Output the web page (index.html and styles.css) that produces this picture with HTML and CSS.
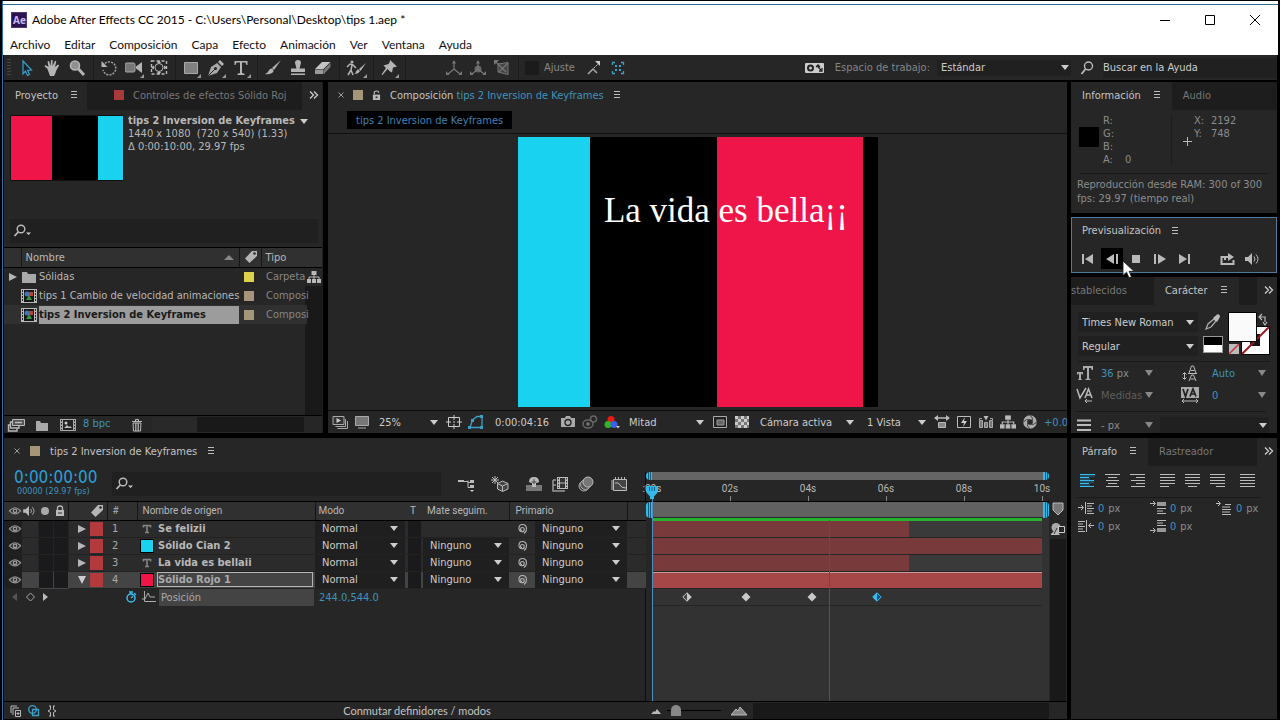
FILE: index.html
```html
<!DOCTYPE html>
<html lang="es">
<head>
    <meta charset="utf-8">
    <meta name="viewport" content="width=device-width">
    <title>Adobe After Effects CC 2015</title>
    <link rel="stylesheet" href="styles.css">
</head>
<body>
    <!-- iconos repetidos -->
    <svg class="defs" aria-hidden="true">
        <symbol id="menu" viewBox="0 0 8 8"><path d="M1 .5h6M1 3.500h6M1 6.500h6" stroke="#bbb" fill="none"/></symbol>
        <symbol id="more" viewBox="0 0 10 8"><path d="M1 .5 4.500 4 1 7.500M5 .5 8.500 4 5 7.500" stroke="#ccc" stroke-width="1.300" fill="none"/></symbol>
        <symbol id="close" viewBox="0 0 6 6"><path d="m.5.5 5 5m0-5-5 5" stroke="#999" fill="none"/></symbol>
        <symbol id="search" viewBox="0 0 20 14"><circle cx="8" cy="5" r="3.800" fill="none" stroke="#bbb" stroke-width="1.400"/><path d="M5.300 8 1.500 12" stroke="#bbb" stroke-width="1.800"/><path d="M13 8.500h5L15.500 11z" fill="#ccc"/></symbol>
        <symbol id="eye" viewBox="0 0 14 10"><path d="M.5 5Q7-2.500 13.500 5 7 12 .5 5z" fill="#8c8c8c"/><path d="M2.500 5Q7-.5 11.500 5 7 9.500 2.500 5z" fill="#222"/><circle cx="7" cy="5" r="2.400" fill="#999"/><circle cx="7" cy="4.800" r="1" fill="#222"/></symbol>
        <symbol id="tag" viewBox="0 0 14 14"><path d="M8 1h5v5L5.500 13 1 8.500z" fill="#b5b5b5"/><circle cx="10.500" cy="3.500" r="1.200" fill="#222"/></symbol>
        <symbol id="spiral" viewBox="0 0 12 12"><path d="M6 7.500C4 7.500 4 4.500 6.200 4.500 9 4.500 8.800 8.800 6 8.800 1.800 8.800 2 1.500 6.300 1.500c3 0 4.200 2.200 4.200 4.500 0 2-1 3.500-2.500 4.500" fill="none" stroke="#b5b5b5" stroke-width="1.100"/></symbol>
        <symbol id="comp" viewBox="0 0 16 14"><path d="M0 0h16v14H0z" fill="#b9b9b9"/><path d="M3 1h10v12H3z" fill="#171717"/><path d="M1 1h1v2H1zm0 3h1v2H1zm0 3h1v2H1zm0 3h1v2H1zM14 1h1v2h-1zm0 3h1v2h-1zm0 3h1v2h-1zm0 3h1v2h-1z" fill="#222"/><circle cx="6" cy="5" r="2.500" fill="#3c78b8"/><path d="M8 3h4v4H8z" fill="#b8402c"/><path d="m5 11 3-5 3 5z" fill="#2f9a40"/></symbol>
        <symbol id="tree" viewBox="0 0 14 12"><path d="M4.500 0h5v4h-5zM0 8h4v4H0zm5 0h4v4H5zm5 0h4v4h-4z" fill="#b9b9b9"/><path d="M7 4v4M2 8V6h10v2" stroke="#b9b9b9" fill="none"/></symbol>
        <symbol id="folder" viewBox="0 0 14 12"><path d="M0 1h5l1 2h8v9H0z" fill="#a9a9a9"/></symbol>
        <symbol id="text" viewBox="0 0 10 12"><path d="M1 2.500h8M5 2v8M1.500 2v2.500m7-2.500v2.500M3 9.500h4" fill="none" stroke="#858585" stroke-width="1.600"/></symbol>
        <symbol id="key" viewBox="0 0 10 10"><path d="m5 .5 4.500 4.500L5 9.500.5 5z" fill="#c8c8c8"/></symbol>
        <symbol id="key-half" viewBox="0 0 10 10"><path d="m5 .8 4.200 4.200L5 9.200.8 5z" fill="#444" stroke="#c8c8c8"/><path d="m5 .5 4.500 4.500L5 9.500z" fill="#c8c8c8"/></symbol>
        <symbol id="key-on" viewBox="0 0 10 10"><path d="m5 .8 4.200 4.200L5 9.200.8 5z" fill="#0d5a80" stroke="#39bdf0"/><path d="m5 .5-4.500 4.500L5 9.500z" fill="#39bdf0"/></symbol>
        <symbol id="speaker" viewBox="0 0 16 12"><path d="M1 4h3l4-4v12L4 8H1z" fill="#b9b9b9"/><path d="M10 3.500q2 2.500 0 5M12 1.500q4 4.500 0 9" stroke="#b9b9b9" fill="none"/></symbol>
    </svg>

    <div class="window">
        <header class="titlebar">
            <svg class="logo" viewBox="0 0 16 16"><path d="M0 0h16v16H0z" fill="#2a1450"/><path d="M.5.5h15v15H.5z" fill="none" stroke="#4c3b7c"/><text x="2" y="12" font-size="10" fill="#c9b8f5">Ae</text></svg>
            <span class="title">Adobe After Effects CC 2015 - C:\Users\Personal\Desktop\tips 1.aep *</span>
            <div class="win-buttons">
                <button aria-label="Minimizar"><svg viewBox="0 0 12 12"><path d="M1 6.500h10" stroke="#000"/></svg></button>
                <button aria-label="Maximizar"><svg viewBox="0 0 12 12"><path d="M1.500 1.500h9v9h-9z" fill="none" stroke="#000"/></svg></button>
                <button aria-label="Cerrar"><svg viewBox="0 0 12 12"><path d="m1 1 10 10m0-10L1 11" fill="none" stroke="#000"/></svg></button>
            </div>
        </header>
        <nav class="menubar">
            <button>Archivo</button><button>Editar</button><button>Composición</button><button>Capa</button><button>Efecto</button><button>Animación</button><button>Ver</button><button>Ventana</button><button>Ayuda</button>
        </nav>

        <!-- herramientas -->
        <div class="toolbar">
            <div class="tools">
                <span class="grip"></span>
                <button aria-label="Selección"><svg viewBox="0 0 18 18"><path d="m5 2 8.500 9-4 .3 2 4.200-2 1-2-4.300L5 15z" fill="#16242c" stroke="#3c9fc8" stroke-width="1.200"/></svg></button>
                <button aria-label="Mano"><svg viewBox="0 0 18 18"><path d="M4.500 10 1.500 7.200 2.500 6l3 2L4.500 2.500 6 2l1.500 5L8 1h1.600v6L12 1.800l1.300.5L12 8l3-2.500 1.200 1L13.500 11l-1 3-1.500 3H7z" fill="#b4b4b4"/></svg></button>
                <button aria-label="Zoom"><svg viewBox="0 0 18 18"><circle cx="7" cy="6.500" r="4.500" fill="#909090" stroke="#b4b4b4" stroke-width="1.600"/><path d="m10.500 10 5.500 6" stroke="#b4b4b4" stroke-width="3"/></svg></button>
            </div>
            <div class="tools">
                <button aria-label="Rotación"><svg viewBox="0 0 18 18"><path d="M5 4.500a6.500 6.500 0 1 1-2 6.500" fill="none" stroke="#a0a0a0" stroke-width="1.500" stroke-dasharray="2 1.200"/><path d="M1.500 2v6h6z" fill="#b4b4b4"/></svg></button>
                <button aria-label="Cámara" class="sub"><svg viewBox="0 0 18 18"><rect x="0" y="4" width="10" height="9" rx="1.500" fill="#777" stroke="#aaa"/><path d="M11 7.500 17 3v11l-6-4.500z" fill="#b4b4b4"/></svg></button>
                <button aria-label="Panorámica"><svg viewBox="0 0 18 18"><path d="M1.500 2h15v13h-15z" fill="none" stroke="#bbb" stroke-width="1.400" stroke-dasharray="3 2"/><circle cx="9" cy="8.500" r="4" fill="#262626" stroke="#bbb"/><path d="m9 1 2 3H7zm0 15 2-3H7zM1 8.500l3-2v4zm16 0-3-2v4z" fill="#bbb"/></svg></button>
            </div>
            <div class="tools">
                <button aria-label="Rectángulo" class="sub"><svg viewBox="0 0 18 18"><path d="M2.500 3.500h13v11h-13z" fill="#808080" stroke="#aaa"/></svg></button>
                <button aria-label="Pluma" class="sub"><svg viewBox="0 0 18 18"><path d="M1 17 4 8l6-4 4 4-4 6z" fill="#a8a8a8"/><path d="m1 17 7-7" stroke="#262626"/><circle cx="8.500" cy="9.500" r="1.500" fill="#262626"/><path d="m11 3 2-2 4 4-2 2z" fill="#b4b4b4"/></svg></button>
                <button aria-label="Texto" class="sub"><svg viewBox="0 0 18 18"><path d="M2.500 2h13v4h-1l-1-2.500H10V14l2.500.8V16h-7v-1.200L8 14V3.500H4.500l-1 2.500h-1z" fill="#b4b4b4"/></svg></button>
            </div>
            <div class="tools">
                <button aria-label="Pincel"><svg viewBox="0 0 18 18"><path d="m17 1-9 8 2 2z" fill="#b4b4b4"/><path d="M7.500 9.500q2 .5 2 3Q7 16 1 15q3-1 3.500-3 1-2.500 3-2.500z" fill="#b4b4b4"/></svg></button>
                <button aria-label="Clonar"><svg viewBox="0 0 18 18"><path d="M7.500 9.500 6 4q0-3 3-3t3 3l-1.500 5.500H16V13H2V9.500zM2 14.500h14V16H2z" fill="#b4b4b4"/></svg></button>
                <button aria-label="Borrador"><svg viewBox="0 0 18 18"><path d="m1 10 7-7h8.500l-7 7z" fill="#c4c4c4"/><path d="M1 10.500h8.500V15H1z" fill="#999"/><path d="m10 10.500 6.500-6.500v4L10 15z" fill="#777"/></svg></button>
            </div>
            <div class="tools">
                <button aria-label="Rotopincel" class="sub wide"><svg viewBox="0 0 20 18"><circle cx="6" cy="3" r="1.500" fill="#b4b4b4"/><path d="M1 8l3-3 3 1 3 3M6 6l-1 5 2 5M5 11l-3 5" fill="none" stroke="#b4b4b4" stroke-width="1.500"/><path d="m20 4-7 6 1.500 2zM12 10l2 2.500Q12 15 8 15q2-1 2-2.500z" fill="#b4b4b4"/></svg></button>
            </div>
            <div class="tools">
                <button aria-label="Posición libre" class="sub"><svg viewBox="0 0 18 18"><path d="m10 1 7 6.500-2 .5-2 .5-1 5-2-1-2.500-2.500L2.500 16l-1-.5L6 9 3.500 6.500 8.500 5l1-1.500z" fill="#b4b4b4"/></svg></button>
            </div>
            <div class="tools axes">
                <button aria-label="Eje local"><svg viewBox="0 0 18 18"><path d="M9 10V3M9 10l-6 5M9 10l6 5" stroke="#777" stroke-width="1.200"/><path d="M9 1 7 4.500h4zM1 16v-4l3.500 4zM17 16v-4l-3.500 4z" fill="#777"/></svg></button>
                <button aria-label="Eje global"><svg viewBox="0 0 18 18"><circle cx="9" cy="10" r="3.500" fill="#666"/><path d="M9 10V3M9 10l-6 5M9 10l6 5" stroke="#777" stroke-width="1.200"/><path d="M9 1 7 4.500h4zM1 16v-4l3.500 4zM17 16v-4l-3.500 4z" fill="#777"/></svg></button>
                <button aria-label="Eje de vista"><svg viewBox="0 0 18 18"><path d="m5 5 10-1.500v12L5 13z" fill="#444" stroke="#777"/><path d="m3 3 10 10M15 4 6 13" stroke="#777" stroke-width="1.200"/><path d="M1 1h5L1 6z" fill="#777"/></svg></button>
            </div>
            <div class="tools snap">
                <label class="check"><input type="checkbox"> Ajuste</label>
                <button aria-label="Ajustar bordes"><svg viewBox="0 0 18 18"><path d="M3 15l5-5 4 4" fill="none" stroke="#aaa" stroke-width="1.500"/><path d="m9 9 5-5" stroke="#ccc" stroke-dasharray="2 1"/><path d="M15 2v5l-5-5z" fill="#ccc"/></svg></button>
                <button aria-label="Ajustar capas"><svg viewBox="0 0 18 18"><path d="M3.500 6V3.500H6m6 0h2.500V6m0 6v2.500H12m-6 0H3.500V12" fill="none" stroke="#3c9fc8" stroke-width="1.300"/><path d="M6 6h2v2H6zm4 0h2v2h-2zm-4 4h2v2H6zm4 0h2v2h-2z" fill="#3c9fc8"/></svg></button>
            </div>
            <div class="workspace">
                <svg class="ws-icon" viewBox="0 0 20 12"><rect y="1" width="19" height="10" rx="1" fill="#ccc"/><circle cx="5.500" cy="6" r="2.500" fill="none" stroke="#222" stroke-width="2"/><path d="m11 5 2-2 2 2m-2-2v2l3 3m-2 1h3V6" fill="none" stroke="#222" stroke-width="1.300"/></svg>
                <label for="ws">Espacio de trabajo:</label>
                <span class="dd"><select id="ws"><option>Estándar</option></select></span>
                <svg class="lens" viewBox="0 0 14 14"><circle cx="8.500" cy="5" r="4" fill="none" stroke="#bbb" stroke-width="1.400"/><path d="M5.500 8 1.500 13" stroke="#bbb" stroke-width="1.800"/></svg>
                <input class="help" type="text" aria-label="Buscar en la Ayuda" value="Buscar en la Ayuda">
            </div>
        </div>

        <main class="panels">
            <div class="upper">
                <!-- proyecto -->
                <section class="panel project">
                    <div class="tabs">
                        <button class="tab on">Proyecto <svg class="i-menu"><use href="#menu"/></svg></button>
                        <button class="tab off fill effects"><i class="sq red"></i>Controles de efectos Sólido Roj</button>
                        <svg class="i-more"><use href="#more"/></svg>
                    </div>
                    <div class="preview-info">
                        <div class="thumb"><i></i><i></i></div>
                        <p><b>tips 2 Inversion de Keyframes</b> <span class="tri"></span><br>1440 x 1080&nbsp; (720 x 540) (1.33)<br>Δ 0:00:10:00, 29.97 fps</p>
                    </div>
                    <div class="searchbox"><svg><use href="#search"/></svg><input type="text" aria-label="Buscar en el proyecto"></div>
                    <div class="list">
                        <table>
                            <colgroup><col class="p-exp"><col class="p-name"><col class="p-tag"><col class="p-type"><col class="p-side"></colgroup>
                            <thead>
                                <tr><th></th><th><span class="row">Nombre<i class="sort"></i></span></th><th><svg class="i-tag"><use href="#tag"/></svg></th><th colspan="2">Tipo</th></tr>
                            </thead>
                            <tbody>
                                <tr><td><i class="play"></i></td><td><span class="row"><svg class="i-folder"><use href="#folder"/></svg><span>Sólidas</span></span></td><td><i class="sq yellow"></i></td><td class="dimtext">Carpeta</td><td class="side"><svg class="i-tree"><use href="#tree"/></svg></td></tr>
                                <tr><td></td><td><span class="row"><svg class="i-comp"><use href="#comp"/></svg><span>tips 1 Cambio de velocidad animaciones</span></span></td><td><i class="sq pink"></i></td><td class="dimtext">Composi</td><td></td></tr>
                                <tr class="sel"><td></td><td><span class="row"><svg class="i-comp"><use href="#comp"/></svg><b>tips 2 Inversion de Keyframes</b></span></td><td><i class="sq sand"></i></td><td class="dimtext">Composi</td><td></td></tr>
                            </tbody>
                        </table>
                    </div>
                    <div class="pfoot">
                        <button aria-label="Interpretar"><svg viewBox="0 0 18 14"><path d="M5.500 1.500h12v6h-12z" fill="#555" stroke="#bbb"/><path d="M8 4.500h7M5 4H3.500v6H12V8M3 7H1.500v6H10v-3" fill="none" stroke="#bbb" stroke-width="1.400"/></svg></button>
                        <button aria-label="Carpeta nueva"><svg viewBox="0 0 18 14"><path d="M3 3h4l1 2h7v8H3z" fill="#aaa"/></svg></button>
                        <button aria-label="Composición nueva"><svg viewBox="0 0 18 14"><path d="M1 1h16v12H1z" fill="#aaa"/><path d="M4 2h10v10H4z" fill="#222"/><path d="m5 10 3-3 2 2 1-1 2 2z" fill="#bbb"/><circle cx="7" cy="5" r="1.500" fill="#ccc"/><path d="M2.500 2v10M15.500 2v10" stroke="#222" stroke-dasharray="1.500"/></svg></button>
                        <button class="blue">8 bpc</button>
                        <button aria-label="Eliminar"><svg viewBox="0 0 14 14"><path d="M2 3.500h10M5.500 3V1.500h3V3" stroke="#bbb" fill="none"/><path d="M3 5h8l-.5 8h-7z" fill="none" stroke="#bbb"/><path d="M5.500 5v8M7 5v8m1.500-8v8" stroke="#bbb" stroke-width=".8"/></svg></button>
                        <span class="hscroll"></span>
                    </div>
                </section>

                <!-- composición -->
                <section class="panel viewer">
                    <div class="tabs comp-tabs">
                        <svg class="i-close"><use href="#close"/></svg><i class="sq sand"></i>
                        <svg class="lock" viewBox="0 0 10 12"><path d="M1 5h8v6H1z" fill="#bbb"/><path d="M2.500 5V3q0-2 2.500-2t2.500 2" fill="none" stroke="#bbb" stroke-width="1.300"/><path d="M4 7h2v2H4z" fill="#333"/></svg>
                        <span class="name">Composición <span class="blue">tips 2 Inversion de Keyframes</span></span>
                        <svg class="i-menu"><use href="#menu"/></svg>
                    </div>
                    <div class="crumbs"><button>tips 2 Inversion de Keyframes</button></div>
                    <div class="stage">
                        <div class="canvas"><i class="cyan"></i><i class="rose"></i><span>La vida es bella¡¡</span></div>
                    </div>
                    <div class="vfoot">
                        <button aria-label="Vista previa"><svg viewBox="0 0 16 14"><path d="M1 1.500h11v8H1z" fill="#333" stroke="#aaa"/><path d="m4.500 3 4.500 2.500-4.500 2.500z" fill="#ccc"/><path d="M3.500 11.500h10V4M5.500 13.500h10V6" fill="none" stroke="#aaa"/></svg></button>
                        <button aria-label="Monitor"><svg viewBox="0 0 16 14"><path d="M1.500 1.500h13v9h-13z" fill="#777" stroke="#aaa"/><path d="M4 13h8" stroke="#aaa"/></svg></button>
                        <span class="dd"><select aria-label="Ampliación"><option>25%</option></select></span>
                        <button aria-label="Cuadrícula"><svg viewBox="0 0 16 14"><path d="M2.500 2.500h11v9h-11zM8 0v5m0 4v5M0 7h5m6 0h5" fill="none" stroke="#ccc"/><path d="M7 7h2" stroke="#ccc"/></svg></button>
                        <button aria-label="Máscara"><svg viewBox="0 0 16 14"><path d="M2 12.500 4.500 5 9 1.500h5v11z" fill="none" stroke="#3c9fc8" stroke-width="1.300"/><path d="M0 11h3v3H0zm12-11h3v3h-3zm0 11h3v3h-3zM3 4h3v3H3z" fill="#3c9fc8"/></svg></button>
                        <button class="time">0:00:04:16</button>
                        <button aria-label="Instantánea"><svg viewBox="0 0 16 14"><path d="M1 3h4l1-2h4l1 2h4v9H1z" fill="#aaa"/><circle cx="8" cy="7.500" r="3" fill="#aaa" stroke="#222" stroke-width="1.300"/></svg></button>
                        <button aria-label="Mostrar instantánea"><svg viewBox="0 0 16 14"><circle cx="11.500" cy="4" r="3" fill="none" stroke="#666" stroke-width="1.500"/><ellipse cx="6" cy="9" rx="5" ry="4" fill="none" stroke="#666" stroke-width="1.500"/><circle cx="6" cy="9" r="1.800" fill="#777"/></svg></button>
                        <button aria-label="Canales"><svg viewBox="0 0 16 14"><circle cx="7" cy="4.500" r="3.500" fill="#e81c12"/><circle cx="4" cy="9.500" r="3.500" fill="#2fb52a"/><circle cx="10" cy="9.500" r="3.500" fill="#3c60e8"/><path d="M12 11h4l-2 2.500z" fill="#ccc"/></svg></button>
                        <span class="dd w80"><select aria-label="Resolución"><option>Mitad</option></select></span>
                        <button aria-label="Región de interés"><svg viewBox="0 0 16 14"><path d="M1.500 1.500h13v11h-13z" fill="#222" stroke="#aaa"/><path d="M5 5h7v5H5z" fill="#666" stroke="#999"/></svg></button>
                        <button aria-label="Transparencia"><svg viewBox="0 0 16 14"><path d="M1 1h14v12H1z" fill="#ccc"/><path d="M4 1h3v3H4zm6 0h3v3h-3zM1 4h3v3H1zm6 0h3v3H7zm6 0h2v3h-2zM4 7h3v3H4zm6 0h3v3h-3zm-9 3h3v3H1zm6 0h3v3H7zm6 0h2v3h-2z" fill="#777"/></svg></button>
                        <span class="dd w100"><select aria-label="Vista 3D"><option>Cámara activa</option></select></span>
                        <span class="dd views"><select aria-label="Diseño de vista"><option>1 Vista</option></select></span>
                        <button aria-label="Píxeles"><svg viewBox="0 0 16 14"><path d="M1 3h14" stroke="#bbb" stroke-width="1.500"/><path d="M0 3l4-3v6zM16 3l-4-3v6z" fill="#bbb"/><path d="M4.500 7.500h7v5h-7z" fill="#888" stroke="#bbb"/></svg></button>
                        <button aria-label="Previsualización rápida"><svg viewBox="0 0 16 14"><path d="M1.500 1.500h13v11h-13z" fill="#222" stroke="#bbb"/><path d="M9 2 5 8h3l-1 4 4-6H8z" fill="#ccc"/></svg></button>
                        <button aria-label="Línea de tiempo"><svg viewBox="0 0 16 14"><path d="M1.500 12.500v-7h3v7zm5 0v-5h3v5zm5 0v-7h3v7z" fill="#777" stroke="#aaa"/><path d="M1.500 5V3.500H4m10.500 1.500V3.500H12" fill="none" stroke="#aaa"/><path d="M5.500 1h5L8 5.500z" fill="#bbb"/></svg></button>
                        <button aria-label="Diagrama de flujo"><svg viewBox="0 0 14 12"><use href="#tree"/></svg></button>
                        <button aria-label="Exposición" class="expo"><svg viewBox="0 0 14 14"><circle cx="7" cy="7" r="4.800" fill="none" stroke="#aaa" stroke-width="4"/><path d="M7 0q4 3 2 7M14 7q-4 4-7 2M7 14q-4-3-2-7M0 7q4-4 7-2" fill="none" stroke="#444"/></svg></button>
                        <button class="blue">+0.0</button>
                    </div>
                </section>
            </div>

            <!-- columna derecha -->
            <div class="sidebar">
                <section class="panel info">
                    <div class="tabs"><button class="tab on">Información <svg class="i-menu"><use href="#menu"/></svg></button><button class="tab off fill">Audio</button></div>
                    <div class="readout">
                        <i class="chip"></i>
                        <dl><dt>R:</dt><dd></dd><dt>G:</dt><dd></dd><dt>B:</dt><dd></dd><dt>A:</dt><dd>0</dd></dl>
                        <svg class="cross" viewBox="0 0 10 10"><path d="M5.500 1v9M1 5.500h9" stroke="#bbb"/></svg>
                        <dl class="xy"><dt>X:</dt><dd>2192</dd><dt>Y:</dt><dd>748</dd></dl>
                    </div>
                    <p class="status">Reproducción desde RAM: 300 of 300<br>fps: 29.97 (tiempo real)</p>
                </section>
                <section class="panel playback">
                    <div class="ptitle">Previsualización <svg class="i-menu"><use href="#menu"/></svg></div>
                    <div class="transport">
                        <button aria-label="Primer fotograma"><svg viewBox="0 0 14 12"><path d="M1 1h2v10H1zM12 1v10L4 6z" fill="#b9b9b9"/></svg></button>
                        <button aria-label="Fotograma anterior" class="pressed"><svg viewBox="0 0 14 12"><path d="M9 1v10L1 6zM11 1h2v10h-2z" fill="#b9b9b9"/></svg></button>
                        <button aria-label="Detener"><svg viewBox="0 0 14 12"><path d="M3 2h8v8H3z" fill="#b9b9b9"/></svg></button>
                        <button aria-label="Fotograma siguiente"><svg viewBox="0 0 14 12"><path d="M1 1h2v10H1zM5 1v10l8-5z" fill="#b9b9b9"/></svg></button>
                        <button aria-label="Último fotograma"><svg viewBox="0 0 14 12"><path d="M2 1v10l8-5zM11 1h2v10h-2z" fill="#b9b9b9"/></svg></button>
                        <button aria-label="Bucle" class="loop"><svg viewBox="0 0 16 12"><path d="M4 4H1.500v7h12V7M5 7V4h4" fill="none" stroke="#b9b9b9" stroke-width="2"/><path d="M8 0v8l6-4z" fill="#b9b9b9"/></svg></button>
                        <button aria-label="Silenciar"><svg viewBox="0 0 16 12"><use href="#speaker"/></svg></button>
                    </div>
                    <svg class="cursor" viewBox="0 0 13 19"><path d="M1 1v14.500l3.500-3.300 2.500 5.600 2.500-1.100-2.400-5.400H12z" fill="#fff" stroke="#111" stroke-width=".8"/></svg>
                </section>
                <section class="panel character">
                    <div class="tabs"><button class="tab off cut">stablecidos</button><button class="tab on">Carácter <svg class="i-menu"><use href="#menu"/></svg></button><span class="tab off fill"></span><svg class="i-more"><use href="#more"/></svg></div>
                    <div class="fonts">
                        <div class="selects">
                            <span class="dd"><select aria-label="Fuente"><option>Times New Roman</option></select></span>
                            <span class="dd"><select aria-label="Estilo"><option>Regular</option></select></span>
                        </div>
                        <div class="dropper">
                            <svg viewBox="0 0 16 16"><path d="m1 15 2-5 6-5 2 2-5 6z" fill="none" stroke="#aaa" stroke-width="1.300"/><path d="m8 4 4-3.500q3-1 3 2.500L12 8z" fill="#bbb"/></svg>
                            <span class="bw"></span>
                        </div>
                        <svg class="paint" viewBox="0 0 42 44"><path d="M13.500 14.500h28v28h-28z" fill="#fff" stroke="#000"/><path d="M22 22h10v12H22z" fill="#161616"/><path d="m14 42 27-27" stroke="#9c1820" stroke-width="2"/><path d="M.5.5h28v29H.5z" fill="#fafafa" stroke="#000"/><path d="M1 32h10v10H1z" fill="#bbb"/><path d="m1 42 10-10" stroke="#c8303c" stroke-width="1.500"/><path d="M32 5h5v5M34 2l-3 3 3 3m1 2 2 3 2-3" fill="none" stroke="#bbb" stroke-width="1.200"/></svg>
                    </div>
                    <div class="metrics">
                        <svg viewBox="0 0 18 16"><path d="M7 1h10v4h-1.200L15 3h-2v10.500l1.500.5v1h-5v-1l1.500-.5V3H9l-.8 2H7zM1 7h6v2.500H6L5.500 8.500H5V14l1 .5v.5H2v-.5l1-.5V8.500h-.5L2 9.500H1z" fill="#aaa"/></svg>
                        <span class="val"><a href="#tam">36</a> px</span><i class="tri sm"></i>
                        <svg viewBox="0 0 18 16"><path d="m8 8 2.500-7h2L15 8M9.500 5.500h4M8 16l2.500-6h2l2.500 6M9.500 14h4M7 8.500h9" fill="none" stroke="#bbb"/><path d="M3.500 8v6M1.500 9.500l2-2 2 2m-4 3 2 2 2-2" fill="none" stroke="#bbb"/></svg>
                        <a class="val" href="#int">Auto</a><i class="tri sm"></i>
                        <svg viewBox="0 0 18 16"><path d="m1 2 3 9 6-10m-1 10 3.500-9L16 11M10 8h5" fill="none" stroke="#bbb" stroke-width="1.500"/><path d="M16 14H9m2-2-2 2 2 2" fill="none" stroke="#bbb"/></svg>
                        <span class="val off">Medidas</span><i class="tri sm"></i>
                        <svg viewBox="0 0 18 16"><path d="M0 0h18v11H0z" fill="#aaa"/><path d="m2 2 2.500 7.500L7 2m2 7.500L12 2l3 7.500M10 7h4" fill="none" stroke="#222" stroke-width="1.700"/><path d="M1 14h16M3 12l-2 2 2 2m12-4 2 2-2 2" fill="none" stroke="#bbb"/></svg>
                        <a class="val" href="#trk">0</a><i class="tri sm"></i>
                    </div>
                    <div class="stroke">
                        <svg viewBox="0 0 16 12"><path d="M1 1.500h14M1 6h14M1 11h14" stroke="#bbb" stroke-width="2"/></svg>
                        <span class="val">- px</span><i class="tri sm"></i>
                        <span class="dd"><select aria-label="Trazo"><option></option></select></span>
                    </div>
                </section>
            </div>

            <!-- línea de tiempo -->
            <section class="panel timeline">
                <div class="tl-left">
                    <div class="tabs comp-tabs">
                        <svg class="i-close"><use href="#close"/></svg><i class="sq sand"></i>
                        <span class="name">tips 2 Inversion de Keyframes</span>
                        <svg class="i-menu"><use href="#menu"/></svg>
                    </div>
                    <div class="tl-head">
                        <div class="clock"><strong>0:00:00:00</strong><small>00000 (29.97 fps)</small></div>
                        <div class="searchbox"><svg><use href="#search"/></svg><input type="text" aria-label="Buscar capas"></div>
                        <button aria-label="Minidiagrama"><svg viewBox="0 0 18 16"><path d="M4 5.500h7m0-1v7h3M11 6.500h3" stroke="#bbb" fill="none"/><path d="M1 4h6v2H1zm12 0h4v3h-4zm0 5h4v3h-4z" fill="#bbb"/><path d="M13 14h4l-2 2z" fill="#ccc"/></svg></button>
                        <button aria-label="Borrador 3D"><svg viewBox="0 0 18 16"><path d="M4 0v8M0 4h8M1 1l6 6m0-6L1 7" stroke="#bbb"/><path d="m11.500 5 5.500 2.500v5.500l-5.500 2.500L6.500 13V7.500z" fill="#444" stroke="#bbb"/><path d="m6.500 7.500 5 2.500 5.500-2.500M11.500 10v5" fill="none" stroke="#bbb"/></svg></button>
                        <button aria-label="Ocultar tímidas"><svg viewBox="0 0 18 16"><path d="M1 9h16v6H1z" fill="#777"/><path d="M4 6q0-5 5-5t5 5l-2 1h-1v4H7V7H6z" fill="#bbb"/><path d="M9 3v5M6.500 6h5" stroke="#444"/></svg></button>
                        <button aria-label="Fusión de fotogramas"><svg viewBox="0 0 18 16"><path d="M6 1h11v12H6z" fill="#bbb"/><path d="M9 2h5v4.500H9zm0 5.500h5v4.500H9z" fill="#333"/><path d="M2 4h3m-3 0v11h11v-1M2 9h3" fill="none" stroke="#999" stroke-width="1.500"/><path d="M7.500 2v10m8-10v10" stroke="#333" stroke-dasharray="1.500"/></svg></button>
                        <button aria-label="Desenfoque"><svg viewBox="0 0 18 16"><circle cx="7" cy="10" r="5" fill="#444" stroke="#aaa"/><circle cx="8.500" cy="8.500" r="5" fill="#555" stroke="#aaa"/><circle cx="11" cy="6" r="5" fill="#777" stroke="#bbb"/></svg></button>
                        <button aria-label="Editor de gráficos" class="graph"><svg viewBox="0 0 18 16"><path d="M2.500 3.500h13v11h-13z" fill="#444" stroke="#bbb"/><path d="M4 7q4-1 5 2t6 3M1 4v10M4.500 1v2m3-2v2m3-2v2m3-2v2" fill="none" stroke="#bbb"/></svg></button>
                    </div>
                    <table class="layers">
                        <colgroup><col class="c18"><col class="c16"><col class="c15"><col class="c15"><col class="c22"><col class="c17"><col class="c30"><col class="cname"><col class="c90"><col class="c18"><col class="c86"><col class="c26"><col class="c92"><col></colgroup>
                        <thead>
                            <tr><th><svg class="i-eye"><use href="#eye"/></svg></th><th><svg class="i-spk"><use href="#speaker"/></svg></th><th><i class="solo"></i></th><th><svg class="i-lock" viewBox="0 0 10 12"><path d="M1 5h8v6H1z" fill="#bbb"/><path d="M2.500 5V3q0-2 2.500-2t2.500 2v2" fill="none" stroke="#bbb" stroke-width="1.300"/><path d="M3 8h4" stroke="#333"/></svg></th><th class="bar"></th><th><svg class="i-tag"><use href="#tag"/></svg></th><th class="bar num">#</th><th class="bar src">Nombre de origen</th><th class="bar">Modo</th><th class="tt">T</th><th class="pad">Mate seguim.</th><th colspan="2" class="bar prim">Primario</th><th class="bar"></th></tr>
                        </thead>
                        <tbody>
                            <tr><td class="vis"><svg class="i-eye"><use href="#eye"/></svg></td><td></td><td class="box"></td><td class="box"></td><td><i class="play"></i></td><td><i class="label"></i></td><td class="num">1</td><td class="nm"><span class="row"><svg class="i-text"><use href="#text"/></svg><b>Se felizii</b></span></td><td class="pick"><span class="dd"><select aria-label="Modo 1"><option>Normal</option></select></span></td><td class="t"></td><td></td><td class="sp"><svg class="i-sp"><use href="#spiral"/></svg></td><td class="pick"><span class="dd"><select aria-label="Primario 1"><option>Ninguno</option></select></span></td><td></td></tr>
                            <tr><td class="vis"><svg class="i-eye"><use href="#eye"/></svg></td><td></td><td class="box"></td><td class="box"></td><td><i class="play"></i></td><td><i class="label"></i></td><td class="num">2</td><td class="nm"><span class="row"><i class="solid cyan"></i><b>Sólido Cian 2</b></span></td><td class="pick"><span class="dd"><select aria-label="Modo 2"><option>Normal</option></select></span></td><td class="t"></td><td class="pick"><span class="dd"><select aria-label="Mate 2"><option>Ninguno</option></select></span></td><td class="sp"><svg class="i-sp"><use href="#spiral"/></svg></td><td class="pick"><span class="dd"><select aria-label="Primario 2"><option>Ninguno</option></select></span></td><td></td></tr>
                            <tr><td class="vis"><svg class="i-eye"><use href="#eye"/></svg></td><td></td><td class="box"></td><td class="box"></td><td><i class="play"></i></td><td><i class="label"></i></td><td class="num">3</td><td class="nm"><span class="row"><svg class="i-text"><use href="#text"/></svg><b>La vida es bellaii</b></span></td><td class="pick"><span class="dd"><select aria-label="Modo 3"><option>Normal</option></select></span></td><td class="t"></td><td class="pick"><span class="dd"><select aria-label="Mate 3"><option>Ninguno</option></select></span></td><td class="sp"><svg class="i-sp"><use href="#spiral"/></svg></td><td class="pick"><span class="dd"><select aria-label="Primario 3"><option>Ninguno</option></select></span></td><td></td></tr>
                            <tr class="sel"><td class="vis"><svg class="i-eye"><use href="#eye"/></svg></td><td></td><td class="box"></td><td class="box"></td><td><i class="tri"></i></td><td><i class="label"></i></td><td class="num">4</td><td class="nm"><span class="row"><i class="solid rose"></i><b>Sólido Rojo 1</b></span></td><td class="pick"><span class="dd"><select aria-label="Modo 4"><option>Normal</option></select></span></td><td class="t"></td><td class="pick"><span class="dd"><select aria-label="Mate 4"><option>Ninguno</option></select></span></td><td class="sp"><svg class="i-sp"><use href="#spiral"/></svg></td><td class="pick"><span class="dd"><select aria-label="Primario 4"><option>Ninguno</option></select></span></td><td></td></tr>
                            <tr class="prop"><td colspan="6"><svg class="keynav" viewBox="0 0 46 12"><path d="M13 2v8L8 6z" fill="#555"/><path d="m26.500 2 4 4-4 4-4-4z" fill="none" stroke="#aaa"/><path d="M39 2v8l5-4z" fill="#bbb"/></svg></td><td class="watch"><svg viewBox="0 0 12 12"><circle cx="6" cy="7" r="4" fill="none" stroke="#39bdf0" stroke-width="1.500"/><path d="M4 1h4M6 1v2M6 7l2-2M9 2l2 2" stroke="#39bdf0" stroke-width="1.300"/></svg></td><td><span class="row"><svg class="curve" viewBox="0 0 14 12"><path d="M2.500 0v10.500H14M0 8h3m0 0 3-6 2 4h5" fill="none" stroke="#aaa"/></svg><span class="pname">Posición</span></span></td><td colspan="6"><a href="#pos">244.0,544.0</a></td></tr>
                        </tbody>
                    </table>
                </div>

                <div class="tl-right">
                    <div class="nav"><i class="grab l"></i><i class="navbar"></i><i class="grab r"></i></div>
                    <div class="ruler"><span>:00s</span><span>02s</span><span>04s</span><span>06s</span><span>08s</span><span>10s</span></div>
                    <div class="work"><i class="grab l"></i><i class="workbar"></i><i class="grab r"></i></div>
                    <div class="tracks">
                        <div class="track"><i style="width:66%"></i></div>
                        <div class="track"><i style="width:100%"></i></div>
                        <div class="track"><i style="width:66%"></i></div>
                        <div class="track sel"><i style="width:100%"></i></div>
                        <div class="track keys">
                            <svg style="left:9.100%"><use href="#key-half"/></svg>
                            <svg style="left:24.200%"><use href="#key"/></svg>
                            <svg style="left:40.900%"><use href="#key"/></svg>
                            <svg style="left:57.800%"><use href="#key-on"/></svg>
                        </div>
                    </div>
                    <div class="heads"><i class="now"></i><i class="play-line" style="left:45.400%"></i><svg class="marker" viewBox="0 0 12 14"><path d="M0 1h12v6l-4 4.500V14H4v-2.500L0 7z" fill="#35b9ea"/><path d="M3.500 2v4M6 2v4m2.500-4v4" stroke="#0c5e84"/></svg></div>
                </div>

                <div class="tl-side">
                    <svg class="shield" viewBox="0 0 12 14"><path d="M1 1h10v7l-5 5-5-5z" fill="#777" stroke="#bbb"/></svg>
                    <svg class="nest" viewBox="0 0 14 12"><circle cx="5" cy="4.500" r="4.500" fill="#aaa"/><path d="M0 12v-1l5-5 4 6z" fill="#bbb"/><path d="m3 11 3-6" stroke="#333"/><path d="M7.500 3.500h6v6h-6z" fill="#262626" stroke="#ccc"/></svg>
                    <span class="vscroll"></span>
                </div>

                <div class="tl-foot">
                    <div class="foot-left">
                        <svg viewBox="0 0 12 12"><path d="M1 8V1h6M3 10V3h6M5.500 5.500h5v6h-5zM8 7v3M6.500 8.500h3" fill="none" stroke="#bbb"/></svg>
                        <svg viewBox="0 0 12 12"><circle cx="4.500" cy="4.500" r="3.800" fill="none" stroke="#3c9fc8" stroke-width="1.300"/><path d="M4.500 4.500h6v6h-6z" fill="none" stroke="#3c9fc8" stroke-width="1.300"/></svg>
                        <svg viewBox="0 0 12 12"><path d="M4.500 1v3.500L2 6l2.500 1.500V11M7.500 1v3.500L10 6 7.500 7.500V11M3 1h2M3 11h2M7 1h2M7 11h2" fill="none" stroke="#bbb"/></svg>
                        <button class="switch">Conmutar definidores / modos</button>
                    </div>
                    <div class="foot-zoom">
                        <svg viewBox="0 0 10 6"><path d="m0 6 3-3 1 1 2-3 4 5z" fill="#bbb"/></svg>
                        <input type="range" aria-label="Zoom de tiempo" min="0" max="100" value="8">
                        <svg class="big" viewBox="0 0 16 10"><path d="m0 9 5-6 2 2 2-4 7 8z" fill="#888" stroke="#bbb"/></svg>
                        <span class="foot-scroll"></span>
                    </div>
                </div>
            </section>

            <!-- párrafo -->
            <section class="panel paragraph">
                <div class="tabs"><button class="tab on">Párrafo <svg class="i-menu"><use href="#menu"/></svg></button><button class="tab off fill">Rastreador</button><svg class="i-more"><use href="#more"/></svg></div>
                <div class="aligns">
                    <button aria-label="Izquierda"><svg viewBox="0 0 15 14"><path d="M0 .5h15M0 3.500h9M0 6.500h14M0 9.500h9M0 12.500h14" stroke="#39bdf0"/><path d="M0 2h15M0 5h10M0 8h14M0 11h10" stroke="#1f6a8c"/></svg></button>
                    <button aria-label="Centro"><svg viewBox="0 0 15 14"><path d="M0 .5h15M3 3.500h9M1 6.500h13M3 9.500h9M1 12.500h13" stroke="#bbb"/></svg></button>
                    <button aria-label="Derecha"><svg viewBox="0 0 15 14"><path d="M0 .5h15M6 3.500h9M1 6.500h14M6 9.500h9M1 12.500h14" stroke="#bbb"/></svg></button>
                    <button aria-label="Justificar izquierda" class="gap"><svg viewBox="0 0 15 14"><path d="M0 .5h15M0 3.500h15M0 6.500h15M0 9.500h15M0 12.500h9" stroke="#bbb"/></svg></button>
                    <button aria-label="Justificar centro"><svg viewBox="0 0 15 14"><path d="M0 .5h15M0 3.500h15M0 6.500h15M0 9.500h15M3 12.500h9" stroke="#bbb"/></svg></button>
                    <button aria-label="Justificar derecha"><svg viewBox="0 0 15 14"><path d="M0 .5h15M0 3.500h15M0 6.500h15M0 9.500h15M6 12.500h9" stroke="#bbb"/></svg></button>
                    <button aria-label="Justificar todo" class="gap"><svg viewBox="0 0 15 14"><path d="M0 .5h15M0 3.500h15M0 6.500h15M0 9.500h15M0 12.500h15" stroke="#bbb"/></svg></button>
                </div>
                <div class="indents">
                    <span><svg viewBox="0 0 16 14"><path d="M0 6.500h5M3 4l2.500 2.500L3 9M7.500 1v12M9 2.500h7M9 5h5M9 7.500h7M9 10h5M9 12.500h7" fill="none" stroke="#bbb"/></svg><a href="#il">0</a> px</span>
                    <span><svg viewBox="0 0 16 14"><path d="M0 2.500h5M3 0l2.500 2.500L3 5M7 7.500h9M7 10h6M7 12.500h9" fill="none" stroke="#bbb"/><path d="M7 1h9v4H7z" fill="#999"/></svg><a href="#ib">0</a> px</span>
                    <span><svg viewBox="0 0 16 14"><path d="M0 2.500h4M2 0l2.500 2.500L2 5M9 3.500h6M6 6h8M6 8.500h9M6 11h8M6 13.500h9" fill="none" stroke="#bbb"/></svg><a href="#ip">0</a> px</span>
                    <span><svg viewBox="0 0 16 14"><path d="M16 6.500h-5M13 4l-2.500 2.500L13 9M8.500 1v12M0 2.500h7M0 5h5M0 7.500h7M0 10h5M0 12.500h7" fill="none" stroke="#bbb"/></svg><a href="#ir">0</a> px</span>
                    <span><svg viewBox="0 0 16 14"><path d="M0 11.500h5M3 9l2.500 2.500L3 14M7 1.500h9M7 4h6M7 6.500h9" fill="none" stroke="#bbb"/><path d="M7 9h9v4H7z" fill="#999"/></svg><a href="#ia">0</a> px</span>
                </div>
            </section>
        </main>
    </div>
</body>
</html>
```
FILE: styles.css
```css
* {margin: 0; padding: 0; box-sizing: border-box;}
html, body {height: 100%;}
body {background: #000; color: #b8b8b8; font: 11px/13px "DejaVu Sans Condensed", "DejaVu Sans", sans-serif; border-top: 1px solid #000; border-left: 2px solid #000; overflow: hidden;}
button, input, select {font: inherit; color: inherit; background: none; border: 0; border-radius: 0; outline: 0; white-space: nowrap;}
button {display: flex; align-items: center; justify-content: center;}
a {color: #3f93bd; text-decoration: none;}
svg {display: block; flex: none;}
i {display: block; flex: none; font-style: normal;}
.defs {position: absolute; width: 0; height: 0;}
.blue {color: #3f93bd;}
.row {display: flex; align-items: center;}

.window {height: 100%; padding: 0 3px 1px 1px; display: flex; flex-direction: column; border-left: 1px solid #2b6ea8; background: #000;}

/*barra de título*/
.titlebar {height: 34px; margin: 0 -1px; padding-left: 8px; background: #fff; border-top: 3px solid #fff; box-shadow: inset 0 1px #2c6f8c; color: #000; display: flex; align-items: center; font: 12px/16px Lato, sans-serif;}
.logo {width: 16px; height: 16px; margin-right: 5px; font-family: "Open Sans", sans-serif; font-weight: bold;}
.title {flex: 1;}
.win-buttons {display: flex; padding-right: 1px;}
.win-buttons button {width: 45px; height: 24px;}
.win-buttons svg {width: 12px; height: 12px;}
.menubar {height: 20px; margin: 0 -1px; padding-left: 7px; display: flex; gap: 14px; background: #fff; color: #111; font: 12px/18px Lato, sans-serif;}

/*herramientas*/
.toolbar {height: 25px; margin-bottom: 2px; background: #262626; display: flex; align-items: center;}
.tools {display: flex; align-items: center; gap: 7px; height: 25px; padding: 0 7px 0 6px; border-right: 1px solid #1d1d1d;}
.tools:first-child {padding-left: 3px;}
.grip {width: 4px; height: 18px; background: repeating-linear-gradient(#444 0 1px, #262626 1px 3px);}
.tools svg {width: 18px; height: 18px;}
.tools .wide svg {width: 20px;}
.sub {position: relative;}
.sub::after {content: ""; position: absolute; right: -1px; bottom: -1px; border: 2px solid #999; border-left-color: transparent; border-top-color: transparent;}
.axes {margin-left: 33px; gap: 6px;}
.snap {border: 0; gap: 6px;}
.check {display: flex; align-items: center; gap: 5px; margin-right: 4px; color: #888;}
.check input {appearance: none; width: 14px; height: 14px; background: #1b1b1b;}
.workspace {margin-left: auto; display: flex; align-items: center; color: #858585;}
.ws-icon {width: 20px; height: 12px; margin-right: 10px;}
.workspace .dd {width: 134px; margin-left: 7px; padding-left: 4px;}
.lens {width: 14px; height: 14px; margin: 0 9px;}
.help {width: 174px; height: 20px; background: #202020; color: #ccc;}

.dd {display: flex; align-items: center; background: #202020; color: #ccc;}
.dd select {appearance: none; flex: 1; min-width: 0; height: 16px;}
.dd::after, .tri {content: ""; display: inline-block; width: 0; border: 5px solid transparent; border-width: 5px 4px 0; border-top-color: #ccc; flex: none;}
.dd::after {margin-right: 2px;}

/*paneles*/
.panels {flex: 1; min-height: 0; display: grid; grid-template: 5fr 4fr / minmax(0, 1fr) 206px; gap: 5px 4px;}
.upper {display: flex; gap: 5px; min-height: 0; min-width: 0;}
.panel {background: #262626; overflow: hidden; min-width: 0;}
.tabs {height: 28px; display: flex; align-items: center; flex: none; white-space: nowrap;}
.tab {height: 28px; padding: 0 11px 2px; display: flex; align-items: center; gap: 12px; color: #c4c4c4;}
.tab.off {background: #1d1d1d; color: #777; justify-content: flex-start;}
.fill {flex: 1;}
.i-menu {width: 8px; height: 8px;}
.i-more {width: 10px; height: 8px; margin: 0 3px 2px 7px;}
.i-close {width: 6px; height: 6px;}
.i-tag {width: 14px; height: 14px;}
.i-eye {width: 14px; height: 10px;}
.sq {width: 10px; height: 10px; background: #a5967a;}
.sq.red {background: #a83a3c;}
.sq.yellow {background: #dcd24e;}
.sq.pink {background: #a8937c;}

/*proyecto*/
.project {width: 319px; flex: none; display: flex; flex-direction: column; border-right: 1px solid #1f1f1f;}
.effects {padding-left: 27px; gap: 9px;}
.project .tab.on {padding: 0 9px 2px 11px;}
.preview-info {display: flex; gap: 4px; padding: 4px 0 0 6px; height: 109px; line-height: 13px; white-space: nowrap;}
.thumb {width: 114px; height: 66px; border: 1px solid #111; background: #000; display: flex; justify-content: space-between; margin-top: 1px;}
.thumb i {width: 41px; background: #ef1548;}
.thumb i + i {width: 25px; background: #18d2ef;}
.preview-info .tri {margin-left: 2px;}
.searchbox {display: flex; align-items: center; background: #202020; height: 24px;}
.searchbox svg {width: 20px; height: 14px; margin-left: 3px;}
.searchbox input {flex: 1; min-width: 0;}
.project .searchbox {margin: 0 4px 4px 6px;}
.list {flex: 1; min-height: 0; border-top: 1px solid #000; background: linear-gradient(#191919, #191919) right 0 top 38px / 17px 100% no-repeat;}
table {border-collapse: collapse; table-layout: fixed; width: 100%;}
th {font-weight: normal; text-align: left; height: 19px; background: #303030; border-bottom: 1px solid #000; white-space: nowrap;}
td {white-space: nowrap;}
.p-exp {width: 17px;}
.p-name {width: 218px;}
.p-tag {width: 22px;}
.p-side {width: 15px;}
.list th + th {border-left: 1px solid #151515; padding-left: 4px;}
.list td {height: 19px; padding-left: 5px;}
.list td:nth-child(2) {padding-left: 0;}
.list .side {padding: 0;}
.sort {margin: 0 5px 0 auto; border: 5px solid transparent; border-width: 0 5px 5px; border-bottom-color: #888;}
.play {border: 4px solid transparent; border-width: 4px 0 4px 8px; border-left-color: #b5b5b5;}
.i-folder {width: 14px; height: 12px; margin: 0 3px 0 1px;}
.i-comp {width: 16px; height: 14px; margin-right: 2px;}
.i-tree {width: 14px; height: 12px;}
.dimtext {color: #858585;}
.list .sel td:nth-child(-n+4) {background: #303030;}
.list .sel b {flex: 1; background: #9c9c9c; color: #191919; line-height: 18px;}
.pfoot {height: 18px; flex: none; border-top: 1px solid #000; display: flex; align-items: center; gap: 8px; padding: 0 18px 0 3px;}
.pfoot svg {height: 14px; width: 18px;}
.pfoot .blue {margin: 0 12px 2px -2px;}
.pfoot button:last-of-type svg {width: 14px;}
.hscroll {flex: 1; height: 15px; background: linear-gradient(90deg, #292929 45px, #191919 45px);}

/*visor*/
.viewer {flex: 1; display: flex; flex-direction: column;}
.comp-tabs {padding: 0 0 2px 10px; gap: 10px; color: #c4c4c4;}
.lock {width: 9px; height: 11px;}
.viewer .comp-tabs {gap: 9px;}
.crumbs {height: 24px; flex: none; padding: 1px 19px; border-bottom: 1px solid #111;}
.crumbs button {height: 18px; padding: 0 9px; background: #000; color: #3f82b5;}
.stage {flex: 1; min-height: 0; display: flex; align-items: center; justify-content: center;}
.canvas {width: 360px; height: 270px; background: #000; position: relative; overflow: hidden;}
.canvas i {position: absolute; top: 0; bottom: 0; left: 0; width: 20%; background: #18d2ef;}
.canvas .rose {left: 55.5%; width: 40.5%; background: #ef1548;}
.canvas span {position: absolute; left: 24%; top: 54px; color: #fff; font: 35px/40px "Liberation Serif", serif;}
.vfoot {height: 23px; flex: none; border-top: 1px solid #0c0c0c; display: flex; align-items: center; gap: 6px; padding-left: 4px; overflow: hidden;}
.vfoot button svg {width: 16px; height: 14px;}
.vfoot .dd {flex: none; background: none; width: 64px; padding-left: 3px;}
.vfoot .w80 {width: 80px;}
.vfoot .w100 {width: 100px; padding-left: 4px;}
.vfoot .views {width: 66px; padding-left: 5px;}
.vfoot .time {color: #ccc; padding: 0 5px;}

/*columna derecha*/
.sidebar {display: flex; flex-direction: column; gap: 4px; min-height: 0;}
.info {height: 131px; flex: none;}
.readout {display: flex; margin: 4px 8px 0; padding-bottom: 7px; border-bottom: 1px solid #1a1a1a; color: #8c8c8c;}
.chip {width: 20px; height: 20px; margin: 13px 4px 0 0; background: #000;}
dl {display: grid; grid-template-columns: 22px auto; align-content: start;}
.xy {grid-template-columns: 17px auto;}
dd {min-height: 13px;}
.readout dl:first-of-type {width: 69px; border-right: 1px solid #1c1c1c;}
.cross {width: 10px; height: 10px; margin: 22px 2px 0 10px;}
.status {padding: 4px 6px; line-height: 14px; color: #8c8c8c; white-space: nowrap;}
.playback {height: 56px; flex: none; border: 1px solid #4d7c9f; position: relative; overflow: visible;}
.ptitle {display: flex; align-items: center; gap: 10px; height: 25px; padding-left: 10px; color: #c4c4c4;}
.transport {display: flex; gap: 2px; padding: 5px 0 0 5px;}
.transport button {width: 22px; height: 21px;}
.transport svg {width: 14px; height: 12px;}
.transport .loop {margin-left: 20px;}
.transport .loop svg, .transport .loop + button svg {width: 16px;}
.pressed {background: #000;}
.cursor {position: absolute; left: 50px; top: 42px; width: 13px; height: 19px; z-index: 2;}
.character {flex: 1; min-height: 0;}
.tab.cut {padding: 0 27px 2px 0;}
.character .fill {padding: 0;}
.fonts {display: flex; gap: 5px; margin: 7px 7px 0; height: 50px; border-bottom: 1px solid #1a1a1a;}
.selects {flex: 1; display: grid; grid-template-rows: 20px 20px; gap: 4px;}
.selects .dd {padding-left: 4px;}
.selects .dd::after {margin-right: 4px;}
.dropper {width: 20px; display: grid; gap: 5px; align-content: start; justify-items: center;}
.dropper svg {width: 16px; height: 18px; margin-top: 1px;}
.bw {width: 20px; height: 17px; border: 1px solid #999; background: linear-gradient(#000 50%, #fff 50%);}
.paint {width: 42px; height: 44px;}
.metrics {display: grid; grid-template-columns: 18px 37px 1fr 24px 39px 8px; column-gap: 7px; align-items: center; grid-auto-rows: 22px; margin: 0 11px 0 5px; padding: 0 0 5px; border-bottom: 1px solid #1a1a1a;}
.metrics svg {width: 18px; height: 16px;}
.val {color: #8c8c8c; white-space: nowrap;}
a.val {color: #3f93bd;}
.val.off {color: #5f5f5f;}
.tri.sm {border-top-color: #888; border-width: 6px 4px 0;}
.stroke {display: grid; grid-template-columns: 18px 37px 8px 1fr; column-gap: 7px; align-items: center; height: 26px; margin: 0 8px 0 5px;}
.stroke svg {width: 16px; height: 12px;}

/*línea de tiempo*/
.timeline {display: grid; grid-template: minmax(0, 1fr) 18px / 642px minmax(0, 1fr) 18px;}
.tl-left {min-width: 0; background: linear-gradient(#0d0d0d, #0d0d0d) right 0 top 34px / 1px 100% no-repeat;}
.comp-tabs .sq {flex: none;}
.tl-head {height: 36px; display: flex; align-items: center; gap: 8px; padding-left: 10px; border-bottom: 1px solid #000;}
.tl-head button svg {width: 18px; height: 16px;}
.tl-head button:nth-of-type(2) {margin: 0 8px;}
.clock {width: 90px; line-height: 14px; color: #3f93bd; white-space: nowrap;}
.clock strong {display: block; font-weight: normal; font-size: 17px; color: #2d9fd8;}
.clock small {font-size: 9px; padding-left: 3px;}
.tl-head .searchbox {flex: 1; margin-right: 8px;}
.graph {margin: 0 17px 0 8px;}
.c15 {width: 15px;}
.c16 {width: 16px;}
.c17 {width: 17px;}
.c18 {width: 18px;}
.c22 {width: 22px;}
.c26 {width: 26px;}
.c30 {width: 30px;}
.cname {width: 178px;}
.c86 {width: 86px;}
.c90 {width: 90px;}
.c92 {width: 92px;}
.layers th {height: 18px; font: 10px/13px Roboto, sans-serif;}
.layers th:first-child, .vis {padding-left: 4px;}
.bar {border-left: 1px solid #151515; padding-left: 3px;}
.layers .num {padding-left: 5px; color: #aaa;}
.layers .src {padding-left: 5px;}
.tt {padding-left: 5px;}
.pad {padding-left: 4px;}
.prim {padding-left: 6px;}
.i-spk {width: 14px; height: 10px;}
.solo {width: 8px; height: 8px; border-radius: 50%; background: #aaa; margin-left: 3px;}
.i-lock {width: 10px; height: 12px; margin-left: 2px;}
.layers td {height: 17px; background: #2b2b2b; border-bottom: 1px solid #222;}
.layers .vis, .layers .pick {background: #1f1f1f;}
.layers .box {background: #1a1a1c; border: 1px solid #242424;}
.layers .sel td {background: #444;}
.layers .sel .vis, .layers .sel .pick {background: #1f1f1f;}
.layers .sel .box {background: #1a1a1c; border-color: #444;}
.layers .t, .layers .sel .t {background-image: linear-gradient(#1a1a1c, #1a1a1c); background-size: 13px 100%; background-position: center; background-repeat: no-repeat;}
.layers .play, .layers td > .tri {margin-left: 9px;}
.layers td > .tri {display: block; border-width: 8px 4px 0;}
.label {width: 13px; height: 14px; background: #b23a3c;}
.i-text {width: 10px; height: 12px; margin: 0 6px 0 5px;}
.solid {width: 14px; height: 14px; border: 1px solid #000; margin: 0 4px 0 3px; background: #18d2ef;}
.solid.rose {background: #ef1548;}
.nm b {line-height: 15px;}
.sel .nm b {flex: 1; margin: 0 2px 0 -1px; line-height: 13px; border: 1px solid #b5b5b5; color: #aaa;}
.pick .dd {background: none; padding-left: 7px;}
.pick .dd::after {margin-right: 7px;}
.sp {padding-left: 7px;}
.i-sp {width: 12px; height: 12px;}
.layers .prop td {background: none; border: 0; height: 17px;}
.keynav {width: 46px; height: 12px;}
.watch svg {width: 12px; height: 12px; margin-left: 18px;}
.curve {width: 14px; height: 12px; margin: 0 3px 0 5px;}
.pname {flex: 1; background: #444; padding-left: 2px; line-height: 17px; margin-right: 1px; color: #aaa;}
.prop a {padding-left: 4px;}

.tl-right {display: flex; flex-direction: column; position: relative; background: #262626; padding-top: 34px;}
.nav, .work {display: flex; flex: none; height: 8px;}
.navbar, .workbar {flex: 1; background: #656565;}
.grab {width: 6px; background: linear-gradient(90deg, transparent 2px, #0d5e85 2px 3px, transparent 3px 4px, #0d5e85 4px 5px, transparent 5px) #35b9ea; border-radius: 4px 0 0 4px;}
.grab.r {border-radius: 0 4px 4px 0;}
.ruler {flex: none; height: 21px; padding-top: 2px; display: flex; justify-content: space-between; margin: 0 -5px 0 -6px; font: 10px/13px Roboto, sans-serif;}
.ruler span {width: 24px; text-align: center; background: linear-gradient(#888, #888) center bottom / 1px 5px no-repeat;}
.work {height: 17px; border-top: 1px solid #000; background: #262626;}
.workbar {background: #616161; height: 15px;}
.tracks {flex: 1; min-height: 0; background: linear-gradient(#27b32f, #27b32f) 0 0 / calc(100% - 7px) 3px no-repeat #323232; padding-top: 3px; margin: 0 0 0 6px;}
.track {height: 17px; border-bottom: 1px solid #252525; background: #3b3a3a; position: relative; margin-right: 7px;}
.track i {height: 16px; background: #793a3c;}
.track.sel {background: #505050;}
.track.sel i {background: #a54647; border-top: 1px solid #c99;}
.keys {background: none;}
.keys svg {position: absolute; top: 3px; width: 10px; height: 10px; margin-left: -5px;}
.heads {position: absolute; inset: 48px 7px 0 6px;}
.heads i {position: absolute; top: 0; bottom: 0; left: 0; width: 1px; background: #4a8fc0;}
.heads .play-line {top: 34px; background: #f01010;}
.marker {position: absolute; left: -6px; top: -1px; width: 12px; height: 14px;}
.tl-side {display: flex; flex-direction: column; align-items: center;}
.shield {width: 12px; height: 14px; margin: 64px 0 7px;}
.nest {width: 14px; height: 12px; margin-bottom: 4px;}
.vscroll {flex: 1; width: 16px; background: #191919;}
.tl-foot {grid-column: 1 / -1; border-top: 1px solid #000; display: grid; grid-template-columns: 642px 1fr;}
.foot-left, .foot-zoom {display: flex; align-items: center; gap: 6px; padding-left: 6px;}
.foot-left svg {width: 12px; height: 12px;}
.switch {margin: 0 auto; padding-right: 146px; padding-left: 270px; color: #c4c4c4; font: 11px/13px Lato, sans-serif;}
.foot-zoom {padding-left: 5px;}
.foot-zoom svg {width: 10px; height: 6px;}
.foot-zoom .big {width: 16px; height: 10px; margin-left: 4px;}
.foot-zoom input {appearance: none; width: 54px; height: 12px; background: linear-gradient(#000, #000) center / 100% 1px no-repeat;}
.foot-zoom input::-webkit-slider-thumb {appearance: none; width: 10px; height: 11px; background: #888; border-radius: 5px 5px 0 0;}
.foot-scroll {flex: 1; height: 16px; background: #191919; margin-right: 18px;}

/*párrafo*/
.aligns {display: flex; gap: 10px; margin: 0 17px 0 6px; padding: 8px 0 9px 3px; border-bottom: 1px solid #1a1a1a;}
.aligns svg {width: 15px; height: 14px;}
.aligns .gap {margin-left: 5px;}
.indents {display: grid; grid-template-columns: 72px 66px 1fr; row-gap: 4px; padding: 3px 0 0 7px; white-space: nowrap; color: #8c8c8c;}
.indents span {display: flex; align-items: center; gap: 4px;}
.indents svg {width: 16px; height: 14px;}
```
